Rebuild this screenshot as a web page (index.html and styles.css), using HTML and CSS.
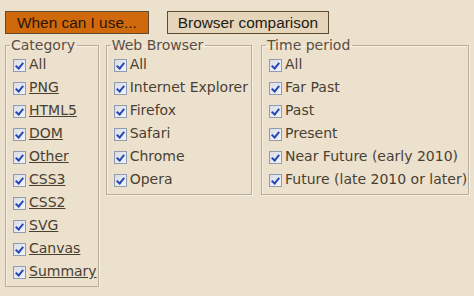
FILE: index.html
```html
<!DOCTYPE html>
<html lang="en">
<head>
    <meta charset="UTF-8">
    <title>When can I use...</title>
    <link rel="stylesheet" href="styles.css">
</head>
<body>
    <!-- Tabs -->
    <div class="tabs">
        <button class="tab active">When can I use...</button>
        <button class="tab">Browser comparison</button>
    </div>

    <!-- Filters -->
    <div class="filters">
        <fieldset class="group cat">
            <legend>Category</legend>
            <label><input type="checkbox" checked> All</label>
            <label><input type="checkbox" checked> <a href="#">PNG</a></label>
            <label><input type="checkbox" checked> <a href="#">HTML5</a></label>
            <label><input type="checkbox" checked> <a href="#">DOM</a></label>
            <label><input type="checkbox" checked> <a href="#">Other</a></label>
            <label><input type="checkbox" checked> <a href="#">CSS3</a></label>
            <label><input type="checkbox" checked> <a href="#">CSS2</a></label>
            <label><input type="checkbox" checked> <a href="#">SVG</a></label>
            <label><input type="checkbox" checked> <a href="#">Canvas</a></label>
            <label><input type="checkbox" checked> <a href="#">Summary</a></label>
        </fieldset>

        <fieldset class="group browser">
            <legend>Web Browser</legend>
            <label><input type="checkbox" checked> All</label>
            <label><input type="checkbox" checked> Internet Explorer</label>
            <label><input type="checkbox" checked> Firefox</label>
            <label><input type="checkbox" checked> Safari</label>
            <label><input type="checkbox" checked> Chrome</label>
            <label><input type="checkbox" checked> Opera</label>
        </fieldset>

        <fieldset class="group time">
            <legend>Time period</legend>
            <label><input type="checkbox" checked> All</label>
            <label><input type="checkbox" checked> Far Past</label>
            <label><input type="checkbox" checked> Past</label>
            <label><input type="checkbox" checked> Present</label>
            <label><input type="checkbox" checked> Near Future (early 2010)</label>
            <label><input type="checkbox" checked> Future (late 2010 or later)</label>
        </fieldset>
    </div>
</body>
</html>
```

FILE: styles.css
```css
body {
    margin: 0;
    padding: 11px 5px 0 5px;
    background-color: #ece1cd;
    font-family: "DejaVu Sans", Verdana, sans-serif;
    font-size: 14px;
    color: #4a3f33;
}

.tabs {
    display: flex;
    gap: 18px;
    margin-bottom: 3px;
}

.tab {
    font-family: "Liberation Sans", Arial, sans-serif;
    font-size: 15.4px;
    height: 23px;
    padding: 0 10px;
    border: 1px solid #5e4a30;
    background-color: #e5d5ba;
    color: #1e1a14;
    margin: 0;
}

.tab.active {
    background-color: #d0690c;
    color: #2a1508;
    padding: 0 11px;
}

.filters {
    display: flex;
    align-items: flex-start;
    gap: 7px;
}

.group {
    margin: 0;
    padding: 1px 1px 6px 7px;
    border: 1px solid #b9ae9d;
    box-shadow: 1px 1px 0 #f8f1e4, inset 1px 1px 0 #f8f1e4;
    display: flex;
    flex-direction: column;
    gap: 5px;
}

.group legend {
    padding: 0 2px 0 1px;
    margin-left: -3px;
    color: #5a4f44;
    line-height: 17px;
}

.group label {
    display: flex;
    align-items: center;
    line-height: 18px;
    white-space: nowrap;
}

.group.browser {
    padding-right: 3px;
}

.group.time {
    margin-left: 2px;
}

a {
    color: #4a3f33;
}

input[type="checkbox"] {
    appearance: none;
    width: 13px;
    height: 13px;
    margin: 2px 3px 0 0;
    border: 1px solid #8e9bb0;
    background: linear-gradient(135deg, #d9dde6, #f4f4f6);
    position: relative;
}

input[type="checkbox"]:checked::after {
    content: "";
    position: absolute;
    left: 3px;
    top: 1px;
    width: 3px;
    height: 6px;
    border: solid #2548b8;
    border-width: 0 2px 2px 0;
    transform: rotate(40deg);
}
```
